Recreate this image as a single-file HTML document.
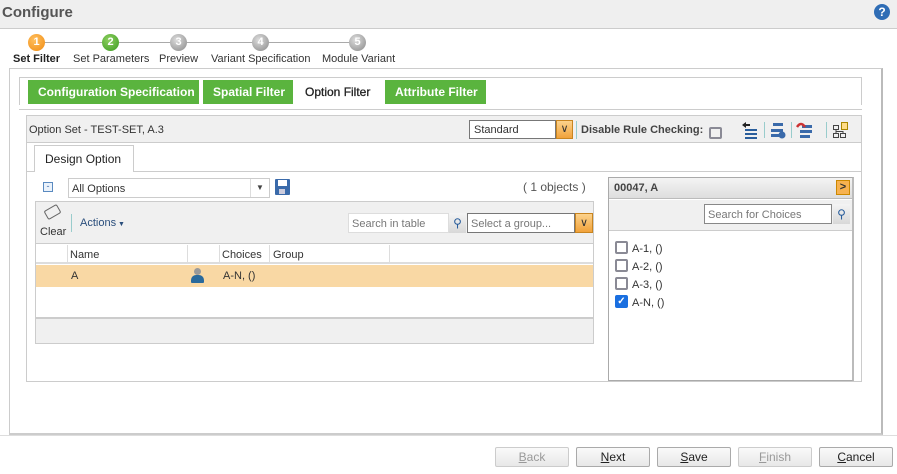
<!DOCTYPE html>
<html><head><meta charset="utf-8"><style>
*{box-sizing:border-box;margin:0;padding:0}
body{width:897px;height:474px;background:#fff;font-family:"Liberation Sans",Arial,sans-serif;font-size:12px;color:#333;position:relative;overflow:hidden}
.a{position:absolute}
.step{position:absolute;top:34px;width:17px;height:17px;border-radius:50%;color:#fff;font-size:11px;text-align:center;line-height:17px;font-weight:bold}
.sl{position:absolute;top:53px;font-size:11px;color:#333}
.tab{position:absolute;top:80px;height:24px;background:#5ab43e;color:#fff;font-weight:bold;font-size:12px;line-height:25px;padding-left:10px}
.btn{position:absolute;top:447px;width:74px;height:20px;border:1px solid #aaa;border-radius:2px;background:linear-gradient(#fafafa,#e8e8e8);text-align:center;line-height:19px;font-size:12px;color:#222}
.btn.d{color:#999;border-color:#ccc}
.cb{position:absolute;left:615px;width:13px;height:13px;border:2px solid #8a8a95;border-radius:2px;background:#fff}
.ci{position:absolute;left:632px;font-size:11px;color:#333}
</style></head><body>
<div class="a" style="left:0;top:0;width:897px;height:29px;background:#efefef;border-bottom:1px solid #ccc"></div>
<div class="a" style="left:2px;top:4px;font-size:15px;font-weight:bold;color:#555">Configure</div>
<div class="a" style="left:874px;top:4px;width:16px;height:16px;border-radius:50%;background:#2f6db5;color:#fff;font-weight:bold;font-size:12px;text-align:center;line-height:16px">?</div>

<div class="a" style="left:36px;top:42px;width:322px;height:1px;background:#aaa"></div>
<div class="step" style="left:28px;background:radial-gradient(circle at 40% 35%,#ffc060,#f08a10)">1</div>
<div class="step" style="left:102px;background:radial-gradient(circle at 40% 35%,#8ed060,#3a9a20)">2</div>
<div class="step" style="left:170px;background:radial-gradient(circle at 40% 35%,#ddd,#888)">3</div>
<div class="step" style="left:252px;background:radial-gradient(circle at 40% 35%,#ddd,#888)">4</div>
<div class="step" style="left:349px;background:radial-gradient(circle at 40% 35%,#ddd,#888)">5</div>
<div class="sl" style="left:13px;font-weight:bold;color:#222">Set Filter</div>
<div class="sl" style="left:73px">Set Parameters</div>
<div class="sl" style="left:159px">Preview</div>
<div class="sl" style="left:211px">Variant Specification</div>
<div class="sl" style="left:322px">Module Variant</div>

<div class="a" style="left:9px;top:68px;width:874px;height:367px;border:1px solid #ccc;border-right:2px solid #bbb;border-bottom:2px solid #ccc;background:#fff"></div>
<div class="a" style="left:19px;top:77px;width:843px;height:28px;border:1px solid #ccc;border-bottom:none"></div>
<div class="tab" style="left:28px;width:171px">Configuration Specification</div>
<div class="tab" style="left:203px;width:90px">Spatial Filter</div>
<div class="tab" style="left:295px;width:88px;background:#fff;color:#222;font-weight:normal;-webkit-text-stroke:0.3px #222">Option Filter</div>
<div class="tab" style="left:385px;width:101px">Attribute Filter</div>

<div class="a" style="left:19px;top:104px;width:843px;height:6px;border-bottom:1px solid #ccc"></div>
<div class="a" style="left:26px;top:115px;width:836px;height:267px;border:1px solid #ccc"></div>
<div class="a" style="left:27px;top:116px;width:834px;height:27px;background:#f0f0f0;border-bottom:1px solid #ccc"></div>
<div class="a" style="left:29px;top:124px;font-size:11px">Option Set - TEST-SET, A.3</div>
<div class="a" style="left:469px;top:120px;width:87px;height:19px;border:1px solid #777;background:#fff;font-size:11px;padding:3px 4px">Standard</div>
<div class="a" style="left:556px;top:120px;width:17px;height:19px;background:linear-gradient(#fcd28c,#f1a23b);border:1px solid #c98520;text-align:center;font-size:11px;line-height:17px">&#8744;</div>
<div class="a" style="left:576px;top:121px;width:1px;height:18px;background:#9cc"></div>
<div class="a" style="left:581px;top:124px;font-size:11px;font-weight:bold;color:#444">Disable Rule Checking:</div>
<div class="a" style="left:709px;top:127px;width:13px;height:12px;border:2px solid #8a8a95;border-radius:2px"></div>
<svg class="a" style="left:740px;top:121px" width="110" height="18">
<g fill="#2a5e9c"><rect x="5" y="8" width="12" height="2"/><rect x="5" y="12" width="12" height="2"/><rect x="5" y="16" width="12" height="2"/><path d="M2 4 l4-3 v2 h4 v2 h-4 v2z" fill="#222"/></g>
<rect x="24" y="1" width="1" height="16" fill="#9cc"/>
<g fill="#3a6aaa"><rect x="33" y="2" width="10" height="3"/><rect x="31" y="8" width="12" height="3"/><rect x="31" y="13" width="8" height="3"/><circle cx="42" cy="14" r="3.5"/></g>
<rect x="51" y="1" width="1" height="16" fill="#9cc"/>
<g><rect x="62" y="4" width="10" height="3" fill="#3a6aaa"/><rect x="60" y="9" width="12" height="3" fill="#3a6aaa"/><rect x="60" y="14" width="10" height="3" fill="#3a6aaa"/><path d="M57 6 q4-6 8 0" stroke="#c33" stroke-width="2.5" fill="none"/></g>
<rect x="86" y="1" width="1" height="16" fill="#9cc"/>
<g fill="none" stroke="#444"><rect x="93.5" y="4.5" width="5" height="4"/><rect x="93.5" y="12.5" width="5" height="4"/><rect x="100.5" y="12.5" width="5" height="4"/><path d="M96 8.5v4M96 10.5h7v2"/><rect x="101.5" y="1.5" width="6" height="7" fill="#fd8" stroke="#a80"/></g>
</svg>

<div class="a" style="left:34px;top:145px;width:100px;height:27px;border:1px solid #ccc;border-bottom:none;background:#fff;font-size:12px;padding:6px 0 0 10px;color:#222">Design Option</div>
<div class="a" style="left:27px;top:171px;width:834px;height:1px;background:#ccc"></div>
<div class="a" style="left:35px;top:171px;width:98px;height:1px;background:#fff"></div>

<div class="a" style="left:43px;top:182px;width:10px;height:10px;border:1px solid #5a8ac0;font-size:9px;line-height:7px;text-align:center;color:#3a6aaa;background:#eaf2fb">-</div>
<div class="a" style="left:68px;top:178px;width:202px;height:20px;border:1px solid #ccc;font-size:11px;padding:4px 3px">All Options</div>
<div class="a" style="left:250px;top:179px;width:1px;height:18px;background:#ddd"></div>
<div class="a" style="left:256px;top:183px;font-size:8px;color:#444">&#9660;</div>
<div class="a" style="left:275px;top:179px;width:15px;height:16px;background:#3a6aaa;border-radius:1px"><div class="a" style="left:3px;top:1px;width:9px;height:6px;background:#fff"></div><div class="a" style="left:4px;top:10px;width:6px;height:5px;background:#ccd"></div></div>
<div class="a" style="left:523px;top:180px;font-size:12px;color:#555">( 1 objects )</div>

<div class="a" style="left:35px;top:201px;width:559px;height:143px;border:1px solid #ccc"></div>
<div class="a" style="left:36px;top:202px;width:557px;height:42px;background:#f0f0f0;border-bottom:1px solid #ccc"></div>
<div class="a" style="left:45px;top:207px;width:15px;height:10px;border:1px solid #666;border-radius:2px;transform:rotate(-30deg)"></div>
<div class="a" style="left:40px;top:226px;font-size:11px">Clear</div>
<div class="a" style="left:71px;top:214px;width:1px;height:18px;background:#9cc"></div>
<div class="a" style="left:80px;top:217px;font-size:11px;color:#2a4e7c">Actions<span style="font-size:7px"> &#9660;</span></div>
<div class="a" style="left:348px;top:213px;width:101px;height:20px;border:1px solid #ddd;background:#fff;font-size:11px;color:#777;padding:4px 3px">Search in table</div>
<div class="a" style="left:449px;top:213px;width:17px;height:20px;background:linear-gradient(#f4f4f4,#d8d8d8);color:#2a5e9c;font-size:12px;text-align:center;line-height:20px">&#9906;</div>
<div class="a" style="left:467px;top:213px;width:108px;height:20px;border:1px solid #777;background:#fff;font-size:11px;color:#777;padding:4px 3px">Select a group...</div>
<div class="a" style="left:575px;top:213px;width:18px;height:20px;background:linear-gradient(#fcd28c,#f1a23b);border:1px solid #c98520;text-align:center;font-size:11px;line-height:18px">&#8744;</div>

<div class="a" style="left:36px;top:245px;width:557px;height:19px;border-bottom:2px solid #ddd;background:#fff"></div>
<div class="a" style="left:67px;top:245px;width:1px;height:19px;background:#ddd"></div>
<div class="a" style="left:187px;top:245px;width:1px;height:19px;background:#ddd"></div>
<div class="a" style="left:219px;top:245px;width:1px;height:19px;background:#ddd"></div>
<div class="a" style="left:269px;top:245px;width:1px;height:19px;background:#ddd"></div>
<div class="a" style="left:389px;top:245px;width:1px;height:19px;background:#ddd"></div>
<div class="a" style="left:70px;top:249px;font-size:11px">Name</div>
<div class="a" style="left:222px;top:249px;font-size:11px">Choices</div>
<div class="a" style="left:273px;top:249px;font-size:11px">Group</div>
<div class="a" style="left:36px;top:265px;width:557px;height:22px;background:#f9d8a4"></div>
<div class="a" style="left:71px;top:270px;font-size:11px">A</div>
<div class="a" style="left:194px;top:268px;width:7px;height:7px;border-radius:50%;background:#999"></div>
<div class="a" style="left:191px;top:275px;width:13px;height:8px;border-radius:5px 5px 1px 1px;background:#2a6a9c"></div>
<div class="a" style="left:223px;top:270px;font-size:11px">A-N, ()</div>
<div class="a" style="left:36px;top:317px;width:557px;height:26px;background:#f0f0f0;border-top:2px solid #ccc"></div>

<div class="a" style="left:608px;top:177px;width:246px;height:204px;border:1px solid #aaa;border-right:2px solid #bbb"></div>
<div class="a" style="left:609px;top:178px;width:243px;height:21px;background:linear-gradient(#f4f4f4,#ddd);border-bottom:1px solid #bbb"></div>
<div class="a" style="left:614px;top:182px;font-size:11px;font-weight:bold;color:#444">00047, A</div>
<div class="a" style="left:836px;top:180px;width:14px;height:15px;background:#f7b250;border:1px solid #c80;font-size:11px;line-height:13px;text-align:center;font-weight:bold">&gt;</div>
<div class="a" style="left:609px;top:200px;width:243px;height:31px;background:#f0f0f0;border-bottom:1px solid #ccc"></div>
<div class="a" style="left:704px;top:204px;width:128px;height:20px;border:1px solid #888;background:#fff;font-size:11px;color:#777;padding:4px 3px">Search for Choices</div>
<div class="a" style="left:833px;top:204px;width:17px;height:20px;background:linear-gradient(#f4f4f4,#d8d8d8);color:#2a5e9c;font-size:12px;text-align:center;line-height:20px">&#9906;</div>
<div class="cb" style="top:241px"></div><div class="ci" style="top:243px">A-1, ()</div>
<div class="cb" style="top:259px"></div><div class="ci" style="top:261px">A-2, ()</div>
<div class="cb" style="top:277px"></div><div class="ci" style="top:279px">A-3, ()</div>
<div class="cb" style="top:295px;background:#1a6fe0;border-color:#1a6fe0;color:#fff;font-size:10px;line-height:9px;text-align:center;font-weight:bold">&#10003;</div><div class="ci" style="top:297px">A-N, ()</div>

<div class="a" style="left:0;top:435px;width:897px;height:1px;background:#ddd"></div>
<div class="btn d" style="left:495px"><u>B</u>ack</div>
<div class="btn" style="left:576px"><u>N</u>ext</div>
<div class="btn" style="left:657px"><u>S</u>ave</div>
<div class="btn d" style="left:738px"><u>F</u>inish</div>
<div class="btn" style="left:819px"><u>C</u>ancel</div>
</body></html>
